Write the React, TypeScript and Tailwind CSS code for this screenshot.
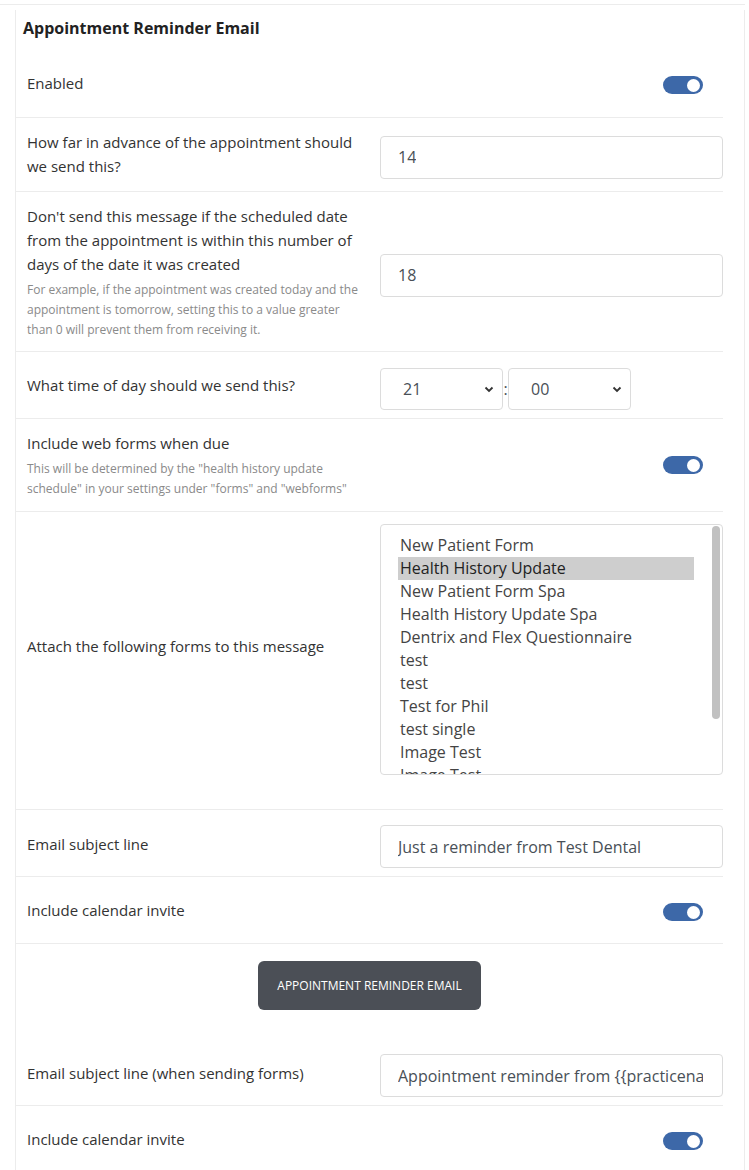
import React from 'react';

const font = { fontFamily: '"Open Sans", "Noto Sans", sans-serif' };

function Toggle() {
  return (
    <div className="w-[40px] h-[18px] rounded-full bg-[#3d68a8] flex items-center justify-end pr-[3px]">
      <div className="w-[13px] h-[13px] rounded-full bg-white" />
    </div>
  );
}

function Row({ children, className = '' }: { children: React.ReactNode; className?: string }) {
  return <div className={`flex items-center border-b border-[#ececec] ${className}`}>{children}</div>;
}

function Label({ text, help, className = '' }: { text: string; help?: string; className?: string }) {
  return (
    <div className={`w-[364px] shrink-0 pl-[11px] pr-[15px] ${className}`}>
      <div className="text-[15px] leading-[24px] text-[#333]">{text}</div>
      {help && <div className="text-[12px] leading-[20px] text-[#8a8a8a] mt-[4px]">{help}</div>}
    </div>
  );
}

function TextBox({ value }: { value: string }) {
  return (
    <div className="flex-1 min-w-0 translate-y-[3px] h-[43px] border border-[#dcdcdc] rounded-[4px] pl-[17px] pr-[19px] flex items-center text-[16px] text-[#495057]">
      <div className="overflow-hidden whitespace-nowrap">{value}</div>
    </div>
  );
}

function Select({ value }: { value: string }) {
  return (
    <div className="w-[123px] h-[42px] border border-[#dcdcdc] rounded-[4px] pl-[22px] pr-[8px] flex items-center justify-between text-[16px] text-[#495057]">
      <span>{value}</span>
      <svg width="10" height="8" viewBox="0 0 10 8">
        <path d="M1.5 2.5 L5 6 L8.5 2.5" fill="none" stroke="#333" strokeWidth="1.8" />
      </svg>
    </div>
  );
}

function ToggleCell() {
  return (
    <div className="flex-1 flex justify-end pr-[20px] mt-[4px]">
      <Toggle />
    </div>
  );
}

const forms = [
  'New Patient Form',
  'Health History Update',
  'New Patient Form Spa',
  'Health History Update Spa',
  'Dentrix and Flex Questionnaire',
  'test',
  'test',
  'Test for Phil',
  'test single',
  'Image Test',
  'Image Test',
];

export default function App() {
  return (
    <div className="w-[749px] h-[1170px] bg-white overflow-hidden pt-[4px]" style={font}>
      <div className="border-t border-[#ececec] w-[745px]">
        <div className="ml-[15px] w-[730px] border-l border-r border-[#ececec] pr-[21px] mt-[5px]">
          <div className="pl-[7px] pt-[6px] pb-[18px] text-[16px] leading-[24px] font-bold text-[#222]">
            Appointment Reminder Email
          </div>

          {/* Enabled */}
          <Row className="pt-[13px] pb-[22px]">
            <Label text="Enabled" />
            <ToggleCell />
          </Row>

          <Row className="pt-[12px] pb-[13px]">
            <Label text="How far in advance of the appointment should we send this?" />
            <TextBox value="14" />
          </Row>

          <Row className="pt-[12px] pb-[11px]">
            <Label
              text="Don't send this message if the scheduled date from the appointment is within this number of days of the date it was created"
              help="For example, if the appointment was created today and the appointment is tomorrow, setting this to a value greater than 0 will prevent them from receiving it."
            />
            <TextBox value="18" />
          </Row>

          <Row className="py-[12px]">
            <Label text="What time of day should we send this?" />
            <div className="flex-1 flex items-center translate-y-[4px]">
              <Select value="21" />
              <span className="w-[5px] text-center text-[16px] text-[#495057]">:</span>
              <Select value="00" />
            </div>
          </Row>

          <Row className="py-[12px]">
            <Label
              text="Include web forms when due"
              help={'This will be determined by the "health history update schedule" in your settings under "forms" and "webforms"'}
            />
            <div className="flex-1 flex justify-end pr-[20px]">
              <Toggle />
            </div>
          </Row>

          <Row className="pt-[12px] pb-[34px]">
            <Label text="Attach the following forms to this message" className="mb-[8px]" />
            <div className="flex-1 h-[251px] border border-[#dcdcdc] rounded-[4px] flex overflow-hidden">
              <div className="flex-1 pl-[17px] pr-[18px] pt-[9px]">
                {forms.map((f, i) => (
                  <div
                    key={i}
                    className={`pl-[2px] text-[16px] leading-[23px] whitespace-nowrap ${i === 1 ? 'bg-[#cecece] text-[#222]' : 'text-[#444]'}`}
                  >
                    {f}
                  </div>
                ))}
              </div>
              <div className="w-[9px] mr-[1px] pt-[1px]">
                <div className="h-[193px] w-[8px] rounded-full bg-[#c1c1c1]" />
              </div>
            </div>
          </Row>

          <Row className="pt-[12px] pb-[11px]">
            <Label text="Email subject line" />
            <TextBox value="Just a reminder from Test Dental" />
          </Row>

          <Row className="py-[21px]">
            <Label text="Include calendar invite" />
            <ToggleCell />
          </Row>

          <div className="flex justify-center pt-[17px] pb-[29px]">
            <button className="h-[49px] w-[223px] rounded-[6px] bg-[#4b4f56] text-white text-[12px] uppercase">
              Appointment Reminder Email
            </button>
          </div>

          <Row className="pt-[12px] pb-[11px]">
            <Label text="Email subject line (when sending forms)" />
            <TextBox value="Appointment reminder from {{practicename}}" />
          </Row>

          <Row className="py-[21px]">
            <Label text="Include calendar invite" />
            <ToggleCell />
          </Row>
        </div>
      </div>
    </div>
  );
}
